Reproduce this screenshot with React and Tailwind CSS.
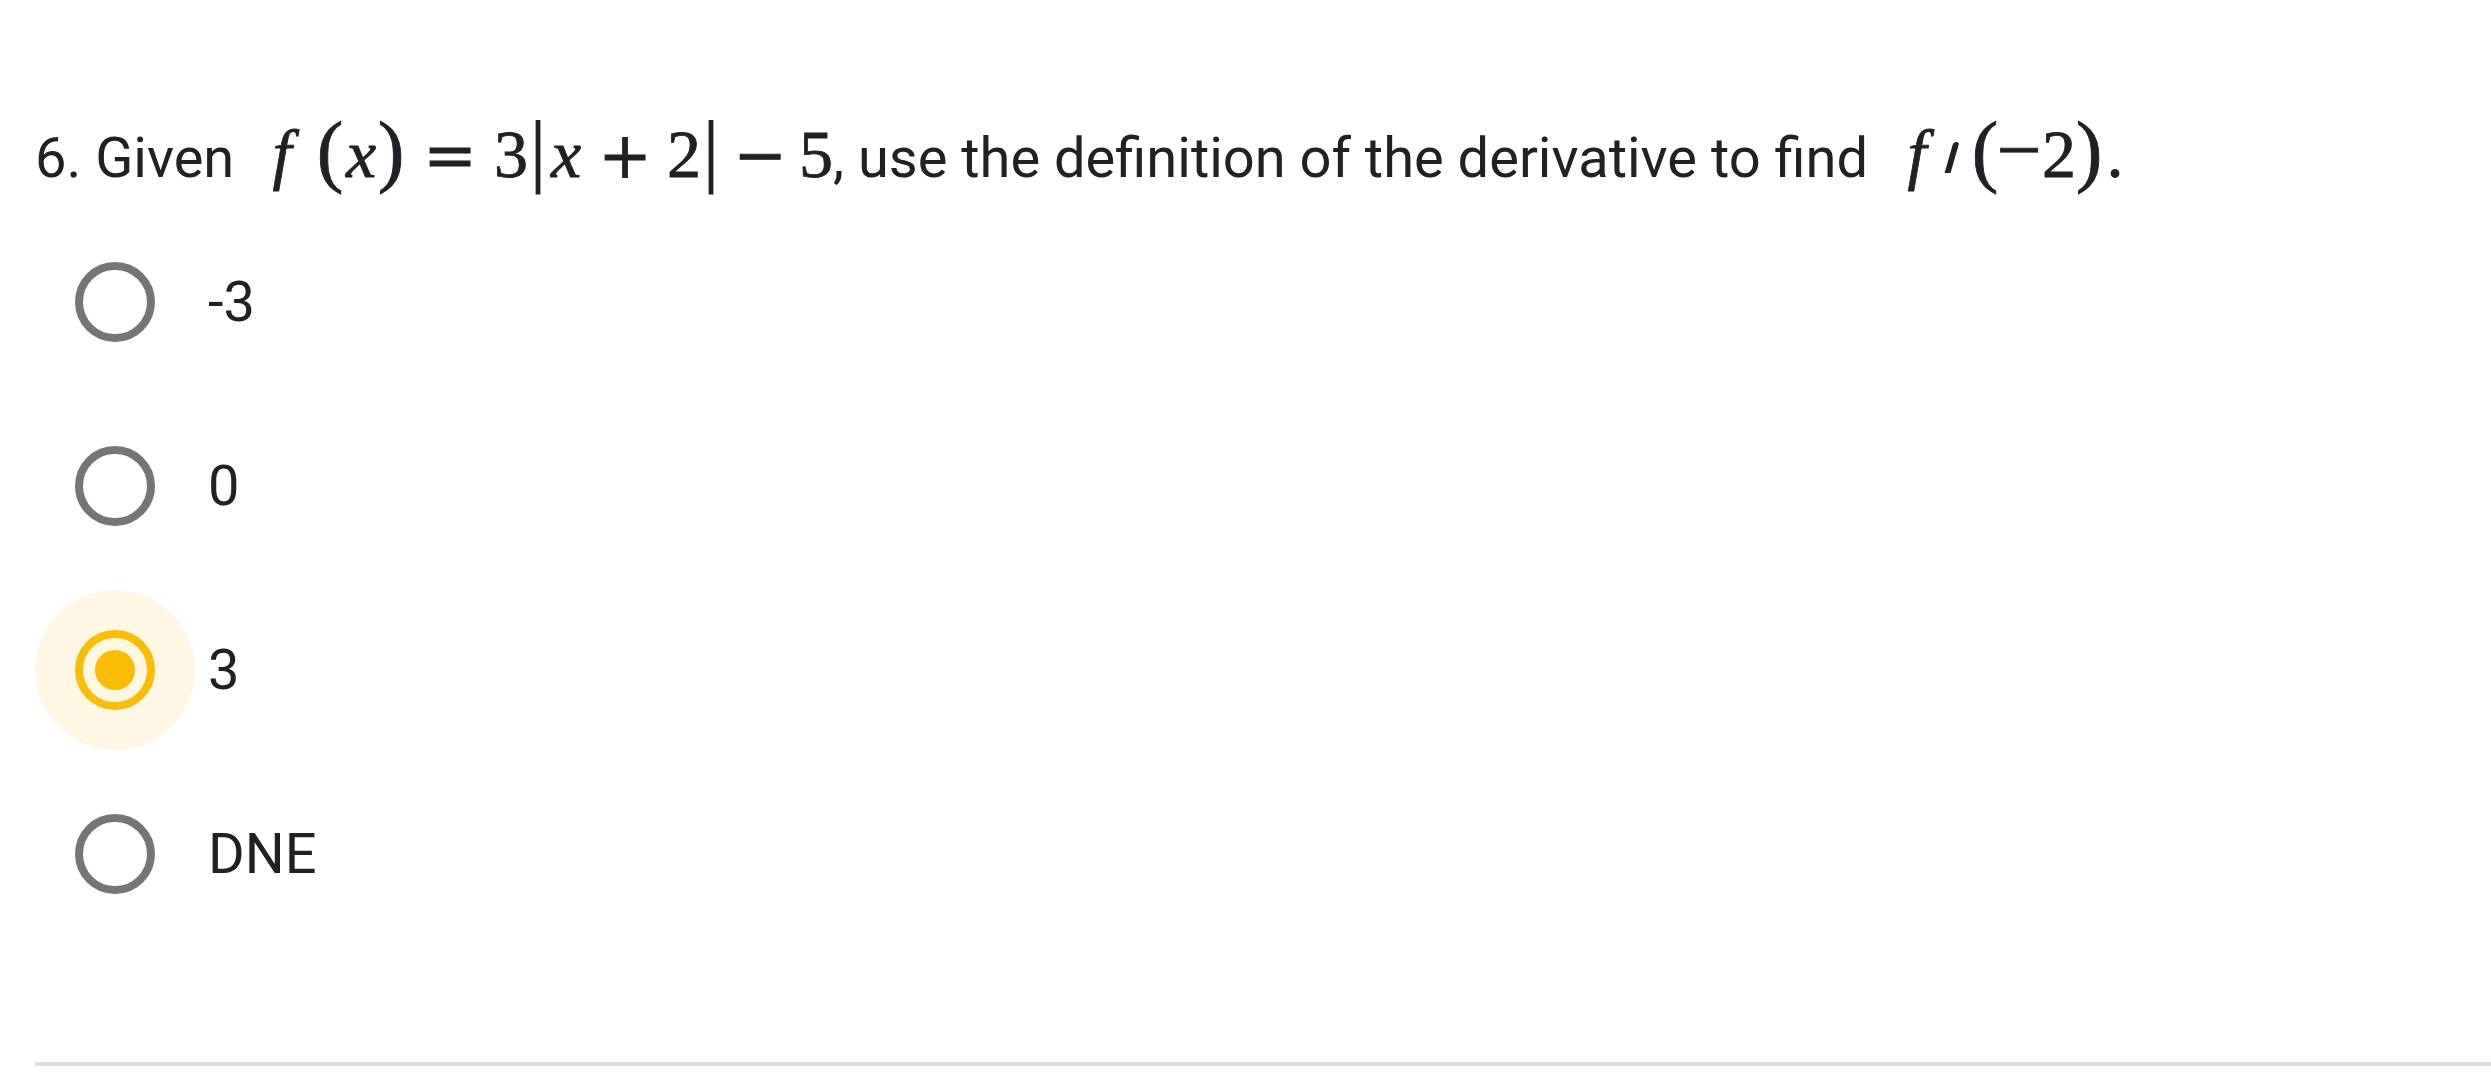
import React from 'react';

const textFont = { fontFamily: 'Roboto, "Liberation Sans", sans-serif' };

const serif = '"Liberation Serif", "DejaVu Serif", serif';
const opFont = '"DejaVu Serif", "Liberation Serif", serif';

// math atoms: glyph, centre x on the page, box width, kind
const lhs = [
  ['f', 282, 26, 'it'],
  ['(', 330, 26, 'big'],
  ['x', 361, 30, 'it'],
  [')', 391, 20, 'big'],
  ['=', 450, 50, 'op'],
  ['3', 511, 30, 'num'],
  ['|', 538, 12, 'big'],
  ['x', 566, 30, 'it'],
  ['+', 625, 50, 'op'],
  ['2', 684, 30, 'num'],
  ['|', 711, 12, 'big'],
  ['−', 760, 46, 'op'],
  ['5', 816, 30, 'num'],
];

const rhs = [
  ['f', 1917, 26, 'it'],
  ['prime', 1952, 6, 'prime'],
  ['(', 1985, 20, 'big'],
  ['−', 2019, 40, 'minus'],
  ['2', 2059, 30, 'num'],
  [')', 2089, 12, 'big'],
  ['.', 2115, 12, 'num'],
];

const kindClass = {
  it: 'italic text-[68px]',
  num: 'text-[68px]',
  big: 'text-[80px]',
  op: 'text-[64px]',
  minus: 'text-[80px]',
};

// lay the atoms out one after another from startX, each centred on its own x
const MathRun = ({ atoms, startX }) => {
  let x = startX;
  return atoms.map(([g, c, w, kind], i) => {
    const left = c - w / 2;
    const ml = left - x;
    x = left + w;
    if (kind === 'prime') {
      return (
        <span
          key={i}
          className="mb-[4px] inline-block h-[31px] -skew-x-[16deg] rounded-t-[3px] bg-[#202124] align-baseline"
          style={{ marginLeft: ml, width: w }}
        />
      );
    }
    return (
      <span
        key={i}
        className={`inline-flex justify-center [-webkit-text-stroke:0.8px_#202124] ${kindClass[kind]}`}
        style={{ marginLeft: ml, width: w, fontFamily: kind === 'op' ? opFont : serif, lineHeight: 0 }}
      >
        {g}
      </span>
    );
  });
};

const options = [
  { label: '-3', checked: false },
  { label: '0', checked: false },
  { label: '3', checked: true },
  { label: 'DNE', checked: false },
];

const Radio = ({ checked }) => (
  <div
    className={`flex h-[160px] w-[160px] shrink-0 items-center justify-center rounded-full ${
      checked ? 'bg-[#fff7e3]' : ''
    }`}
  >
    <div
      className={`flex h-[80px] w-[80px] items-center justify-center rounded-full border-[8px] ${
        checked ? 'border-[#fbbc04]' : 'border-[#757575]'
      }`}
    >
      {checked && <div className="h-[40px] w-[40px] rounded-full bg-[#fbbc04]" />}
    </div>
  </div>
);

export default function App() {
  return (
    <div className="min-h-screen bg-white pl-[35px] text-[#202124]" style={textFont}>
      {/* Question */}
      <div className="whitespace-nowrap pt-[118px] text-[56px] leading-[80px]">
        <span className="inline-block w-[200px]">6. Given</span>
        <MathRun atoms={lhs} startX={235} />
        <span className="ml-[2px] inline-block w-[1071px]">
          , use the definition of the derivative to find
        </span>
        <MathRun atoms={rhs} startX={1904} />
      </div>

      {/* Options */}
      <div className="mt-[12px] flex flex-col">
        {options.map((o) => (
          <div key={o.label} className="flex h-[184px] items-center">
            <Radio checked={o.checked} />
            <span className="ml-[13px] text-[56px] leading-none">{o.label}</span>
          </div>
        ))}
      </div>

      {/* Divider */}
      <div className="mt-[116px] h-[4px] bg-[#dadce0]" />
    </div>
  );
}
